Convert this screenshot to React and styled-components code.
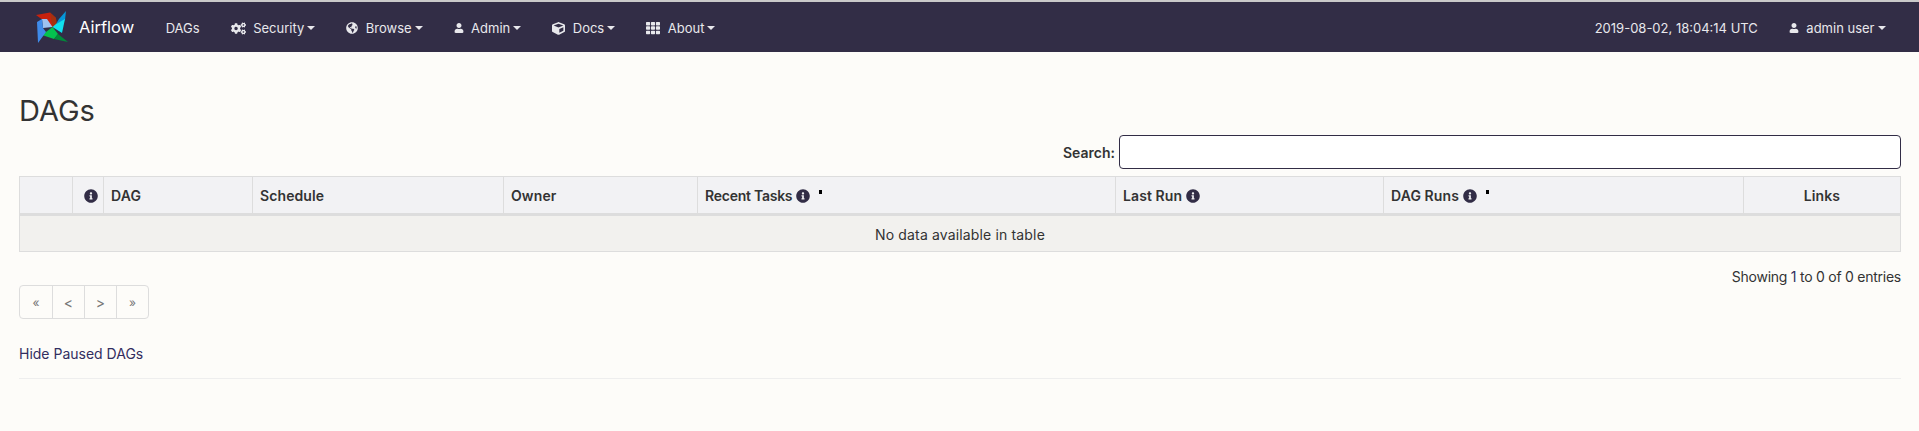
import React from "react";
import styled, { createGlobalStyle } from "styled-components";
import { FaCogs, FaGlobeAmericas, FaUser, FaCube, FaTh, FaInfoCircle } from "react-icons/fa";

const GlobalStyle = createGlobalStyle`
  html, body {
    margin: 0;
    background: #fdfcf9;
    color: #333;
    font-family: "Inter", "Liberation Sans", sans-serif;
    font-size: 14px;
  }
`;

const Navbar = styled.nav`
  display: flex;
  align-items: center;
  justify-content: space-between;
  box-sizing: border-box;
  height: 52px;
  padding: 2px 18px 0 35px;
  background: #322d46;
  border-top: 2px solid #c9c9c9;
  color: #e8e8ec;
`;

const NavGroup = styled.div`
  display: flex;
  align-items: center;
`;

const Brand = styled.div`
  display: flex;
  align-items: center;
  gap: 10px;
  margin-top: -2px;
  margin-right: 16px;
  color: #fff;
  font-size: 16.5px;
`;

const NavItem = styled.div`
  display: flex;
  align-items: center;
  padding: 0 15.5px;
  font-size: 13px;
  white-space: nowrap;

  svg {
    margin-right: 7.5px;
  }
`;

const Caret = styled.span`
  width: 0;
  height: 0;
  margin-left: 3px;
  border-top: 4px solid currentColor;
  border-left: 4px solid transparent;
  border-right: 4px solid transparent;
`;

const Main = styled.main`
  padding: 0 18px 0 19px;
`;

const Title = styled.h1`
  margin: 42px 0 8px;
  font-size: 29px;
  font-weight: 400;
  line-height: 33px;
  color: #333;
`;

const SearchRow = styled.label`
  display: flex;
  align-items: center;
  justify-content: flex-end;
  gap: 4px;
  margin-bottom: 7px;
  font-weight: 600;
`;

const SearchInput = styled.input`
  box-sizing: border-box;
  width: 782px;
  height: 34px;
  background: #fff;
  border: 1px solid #322d46;
  border-radius: 4px;
  outline: none;
`;

const Table = styled.table`
  width: 100%;
  table-layout: fixed;
  border-collapse: collapse;
  border: 1px solid #ddd;
`;

const HeadCell = styled.th`
  box-sizing: border-box;
  width: ${(p) => p.$width}px;
  height: 38px;
  padding: 0 7px;
  background: #f2f2f4;
  border: 1px solid #ddd;
  border-bottom: 3px solid #ddd;
  font-weight: 600;
  font-size: 14px;
  letter-spacing: ${(p) => (p.$tight ? "-0.25px" : "0.1px")};
  text-align: ${(p) => p.$align || "left"};
  white-space: nowrap;

  svg {
    margin-left: 4px;
    vertical-align: -2px;
    color: #322d46;
  }
`;

const SortDot = styled.i`
  display: inline-block;
  width: 3px;
  height: 4px;
  margin-left: 9px;
  background: #000;
  vertical-align: 7px;
`;

const EmptyCell = styled.td`
  height: 37px;
  padding: 1px 0 0;
  box-sizing: border-box;
  background: #f2f1ee;
  border: 1px solid #ddd;
  letter-spacing: 0.15px;
  text-align: center;
`;

const Info = styled.div`
  margin-top: 16px;
  line-height: 17px;
  letter-spacing: -0.25px;
  text-align: right;
`;

const InfoNumber = styled.span`
  color: #322d60;
`;

const Pager = styled.div`
  display: inline-flex;
  box-sizing: border-box;
  height: 34px;
  border: 1px solid #ddd;
  border-radius: 4px;
  vertical-align: top;
`;

const PagerButton = styled.span`
  display: flex;
  box-sizing: border-box;
  align-items: center;
  justify-content: center;
  width: 32px;
  color: #777;
  font-size: ${(p) => p.$size}px;

  & + & {
    border-left: 1px solid #ddd;
  }
`;

const PagerRow = styled.div`
  height: 34px;
`;

const PausedLink = styled.a`
  display: block;
  margin-top: 25px;
  line-height: 20px;
  color: #322d60;
  text-decoration: none;
`;

const Rule = styled.hr`
  margin: 14px 0 0;
  border: 0;
  border-top: 1px solid #eee;
`;

const Logo = () => (
  <svg width="34" height="35" viewBox="0 0 34 35">
    <polygon points="1,5 15,2.5 21,8 17.5,17" fill="#c8210d" />
    <polygon points="15,2.5 21,8 22,15 17.5,17" fill="#a5310f" />
    <polygon points="31,1 24,9 21,14 30,10" fill="#0596d8" />
    <polygon points="21,14 30,9 27,23 17.5,17" fill="#11e1ee" />
    <polygon points="7,25 17.5,17 23,24 19,29" fill="#04c24f" />
    <polygon points="23,24 33,32 19,29" fill="#008a3a" />
    <polygon points="7,9 12,9 17.5,17 8,18" fill="#9fc2f0" />
    <polygon points="2,12 7,9 8,18 11,22 3,33" fill="#3f8bea" />
  </svg>
);

const menu = [
  { label: "Security", Icon: FaCogs, size: 15 },
  { label: "Browse", Icon: FaGlobeAmericas, size: 12 },
  { label: "Admin", Icon: FaUser, size: 10 },
  { label: "Docs", Icon: FaCube, size: 13 },
  { label: "About", Icon: FaTh, size: 14 },
];

const columns = [
  { width: 53 },
  { width: 31, info: true, label: "" },
  { width: 149, label: "DAG" },
  { width: 251, label: "Schedule" },
  { width: 194, label: "Owner" },
  { width: 418, label: "Recent Tasks", info: true, sort: true, tight: true },
  { width: 268, label: "Last Run", info: true },
  { width: 360, label: "DAG Runs", info: true, sort: true },
  { label: "Links", align: "center" },
];

export default function App() {
  return (
    <>
      <GlobalStyle />
      <Navbar>
        <NavGroup>
          <Brand>
            <Logo />
            Airflow
          </Brand>
          <NavItem>DAGs</NavItem>
          {menu.map(({ label, Icon, size }) => (
            <NavItem key={label}>
              <Icon size={size} />
              {label}
              <Caret />
            </NavItem>
          ))}
        </NavGroup>
        <NavGroup>
          <NavItem>2019-08-02, 18:04:14 UTC</NavItem>
          <NavItem>
            <FaUser size={10} />
            admin user
            <Caret />
          </NavItem>
        </NavGroup>
      </Navbar>
      <Main>
        <Title>DAGs</Title>
        <SearchRow>
          Search:
          <SearchInput type="search" />
        </SearchRow>
        <Table>
          <thead>
            <tr>
              {columns.map((col, i) => (
                <HeadCell key={i} $width={col.width} $align={col.align} $tight={col.tight}>
                  {col.label}
                  {col.info && <FaInfoCircle size={14} />}
                  {col.sort && <SortDot />}
                </HeadCell>
              ))}
            </tr>
          </thead>
          <tbody>
            <tr>
              <EmptyCell colSpan={9}>No data available in table</EmptyCell>
            </tr>
          </tbody>
        </Table>
        <Info>
          Showing <InfoNumber>1</InfoNumber> to 0 of 0 entries
        </Info>
        <PagerRow>
          <Pager>
            <PagerButton $size={12}>«</PagerButton>
            <PagerButton $size={14}>&lt;</PagerButton>
            <PagerButton $size={14}>&gt;</PagerButton>
            <PagerButton $size={12}>»</PagerButton>
          </Pager>
        </PagerRow>
        <PausedLink href="#">Hide Paused DAGs</PausedLink>
        <Rule />
      </Main>
    </>
  );
}
